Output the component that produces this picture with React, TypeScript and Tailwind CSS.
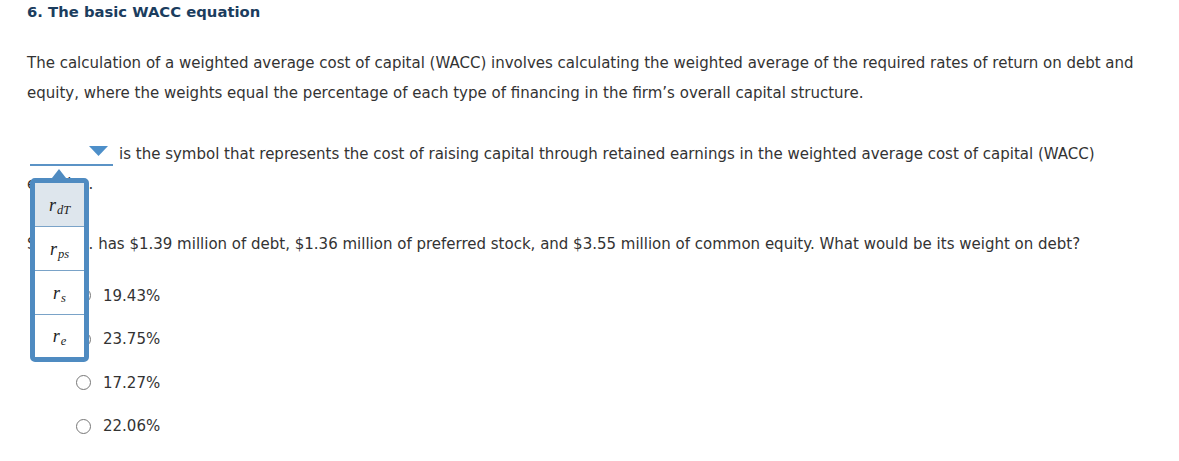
import React from "react";

const options = ["19.43%", "23.75%", "17.27%", "22.06%"];

function Sym({ base, sub }: { base: string; sub: string }) {
  return (
    <span className="italic text-[#222] text-[18px] leading-none" style={{ fontFamily: '"Liberation Serif", "DejaVu Serif", serif' }}>
      {base}
      <sub className="text-[12.5px] relative top-[3px] align-baseline ml-[1px]">{sub}</sub>
    </span>
  );
}

export default function App() {
  const symbols = [
    { base: "r", sub: "dT" },
    { base: "r", sub: "ps" },
    { base: "r", sub: "s" },
    { base: "r", sub: "e" },
  ];

  return (
    <div
      className="w-[1179px] h-[461px] bg-white pl-[27px] text-[15px] text-[#333] overflow-hidden"
      style={{ fontFamily: '"DejaVu Sans", Verdana, sans-serif' }}
    >
      {/* Heading */}
      <h2 className="h-[24px] leading-[24px] font-bold text-[14.8px] text-[#1b3d5e]">6. The basic WACC equation</h2>

      <p className="mt-[24px] leading-[30px] pr-[30px]">
        The calculation of a weighted average cost of capital (WACC) involves calculating the weighted average of the required rates of return on debt and
        equity, where the weights equal the percentage of each type of financing in the firm’s overall capital structure.
      </p>

      {/* Dropdown question */}
      <div className="relative mt-[31px] leading-[30px]">
        <div className="flex items-center">
          <div className="relative ml-[3px] w-[83px] h-[30px] border-b-2 border-[#5b93c6] -mt-[6px] mr-[6px]">
            <svg className="absolute right-[5px] top-[10px]" width="19" height="10" viewBox="0 0 19 10">
              <polygon points="0,0 19,0 9.5,10" fill="#4d8fc9" />
            </svg>
          </div>
          <span>is the symbol that represents the cost of raising capital through retained earnings in the weighted average cost of capital (WACC)</span>
        </div>
        <div className="tracking-[-0.6px]">equation.</div>

        {/* Open listbox */}
        <div className="absolute left-[3px] top-[30px] z-10">
          <svg className="ml-[22px] block" width="14" height="9" viewBox="0 0 14 9">
            <polygon points="7,0 14,9 0,9" fill="#4f8bc1" />
          </svg>
          <div className="w-[59px] border-[5px] border-[#4f8bc1] rounded-[5px] bg-white overflow-hidden">
            {symbols.map((s, i) => (
              <div
                key={i}
                className={`flex items-center justify-center ${i < 3 ? "h-[44px] border-b border-[#7aa3c8]" : "h-[42px]"} ${i === 0 ? "bg-[#dee6ed]" : "bg-white"}`}
              >
                <Sym base={s.base} sub={s.sub} />
              </div>
            ))}
          </div>
        </div>
      </div>

      <p className="mt-[30px] leading-[30px]">
        Shoe Co. has $1.39 million of debt, $1.36 million of preferred stock, and $3.55 million of common equity. What would be its weight on debt?
      </p>

      {/* Answer choices */}
      <div className="mt-[15px]">
        {options.map((o) => (
          <label key={o} className="flex items-center h-[43.5px]">
            <span className="ml-[49px] w-[15px] h-[15px] rounded-full border border-[#777] bg-white" />
            <span className="ml-[12px]">{o}</span>
          </label>
        ))}
      </div>
    </div>
  );
}
